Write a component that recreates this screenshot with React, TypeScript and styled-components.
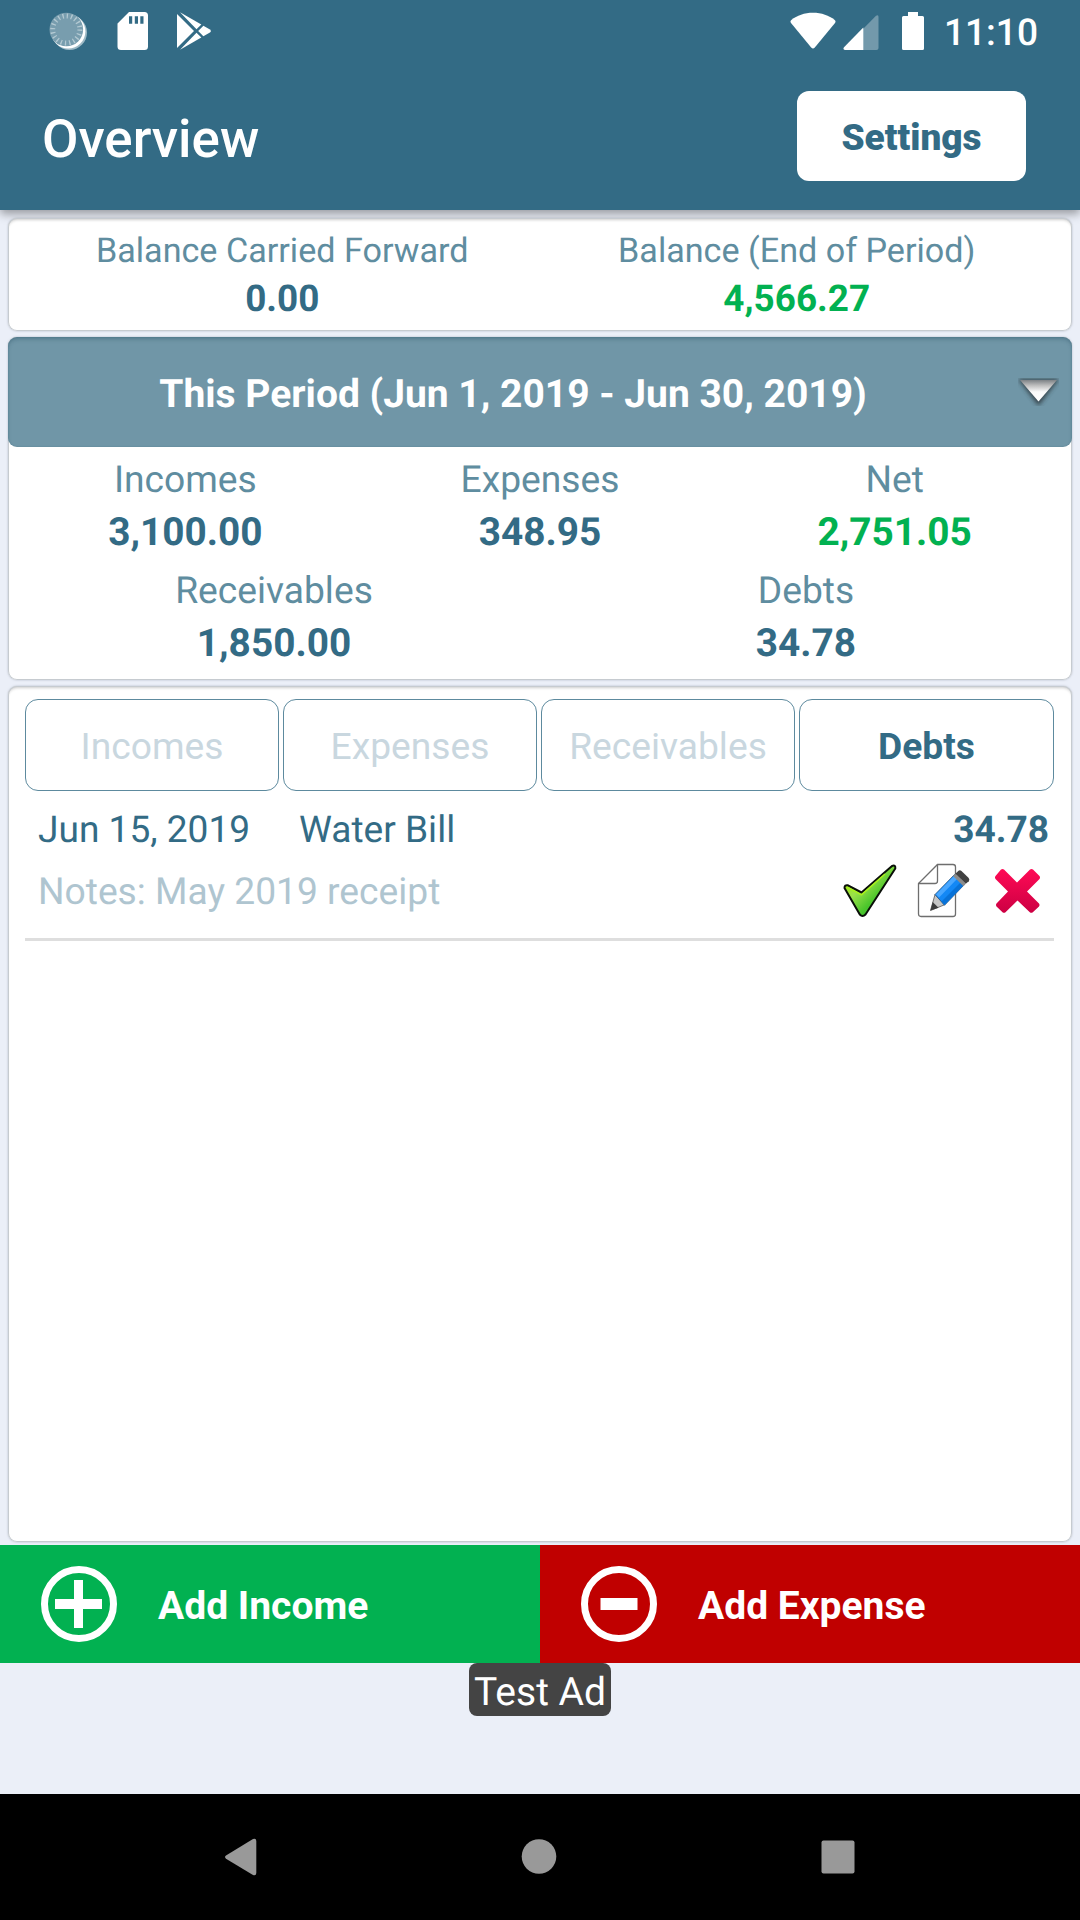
import React from "react";
import styled, { createGlobalStyle } from "styled-components";

const color = {
  primary: "#336b85",
  label: "#5f8da0",
  band: "#7096a7",
  page: "#ebeff8",
  green: "#02b151",
  red: "#c00000",
};

const GlobalStyle = createGlobalStyle`
  * { box-sizing: border-box; }
  body {
    margin: 0;
    background: ${color.page};
    font-family: Roboto, "Liberation Sans", sans-serif;
    text-rendering: geometricPrecision;
  }
  button { font-family: inherit; border: 0; margin: 0; padding: 0; }
  svg { display: block; flex: none; }
`;

const Screen = styled.div`
  width: 1080px;
  height: 1920px;
  display: flex;
  flex-direction: column;
  background: ${color.page};
  overflow: hidden;
`;

const Header = styled.header`
  height: 210px;
  flex: none;
  background: ${color.primary};
  box-shadow: 0 4px 9px rgba(0, 0, 0, 0.36);
`;

const StatusBar = styled.div`
  height: 62px;
  padding: 0 42px 0 49px;
  display: flex;
  align-items: center;
  justify-content: space-between;
`;

const StatusIcons = styled.div<{ $gap: number }>`
  display: flex;
  align-items: center;
  gap: ${(p) => p.$gap}px;
`;

const BatteryTime = styled.div`
  display: flex;
  align-items: center;
  gap: 20px;
  padding-left: 16px;
`;

const Clock = styled.span`
  color: #fff;
  font-size: 37.1px;
  font-weight: 500;
  line-height: 44px;
  padding-top: 7px;
  margin-bottom: 1px;
`;

const AppBar = styled.div`
  height: 148px;
  padding: 1px 54px 0 42px;
  display: flex;
  align-items: center;
  justify-content: space-between;
`;

const Title = styled.h1`
  margin: 0;
  padding-top: 5px;
  color: #fff;
  font-size: 52.9px;
  font-weight: 500;
  line-height: 62px;
`;

const SettingsButton = styled.button`
  width: 229px;
  height: 90px;
  padding-top: 3px;
  margin-bottom: 1px;
  border-radius: 12px;
  background: #fff;
  color: ${color.primary};
  font-size: 37px;
  font-weight: 900;
`;

const Content = styled.main`
  height: 1335px;
  flex: none;
  padding: 8px 8px 3px;
  display: flex;
  flex-direction: column;
`;

const Card = styled.section`
  background: #fff;
  border-radius: 9px;
  box-shadow:
    inset 0 0 0 1px #c6cbd0,
    inset 0 3px 3px -1px rgba(0, 0, 0, 0.2),
    0 0 2px rgba(110, 120, 135, 0.5);
`;

const BalanceCard = styled(Card)`
  height: 113px;
  flex: none;
  padding: 9px 18px 0 17px;
  display: grid;
  grid-template-columns: 1fr 1fr;
`;

const PeriodCard = styled(Card)`
  height: 343px;
  flex: none;
  margin-top: 6px;
`;

const ListCard = styled(Card)`
  flex: 1;
  margin-top: 6px;
  padding: 13px 18px 0 17px;
`;

const Metric = styled.div`
  display: flex;
  flex-direction: column;
  align-items: center;
`;

const MetricLabel = styled.span<{ $small?: boolean }>`
  color: ${color.label};
  font-size: ${(p) => (p.$small ? 34.15 : 37.2)}px;
  line-height: ${(p) => (p.$small ? 49 : 52)}px;
`;

const MetricValue = styled.span<{ $small?: boolean; $positive?: boolean }>`
  color: ${(p) => (p.$positive ? color.green : color.primary)};
  font-size: ${(p) => (p.$small ? 36.9 : 38.8)}px;
  font-weight: 700;
  line-height: ${(p) => (p.$small ? 48 : 53)}px;
`;

const PeriodBand = styled.div`
  height: 110px;
  padding-right: 13px;
  display: flex;
  align-items: center;
  border-radius: 9px;
  background: ${color.band};
  box-shadow: inset 0 3px 4px -1px rgba(30, 70, 90, 0.35), inset 0 0 1px 1px rgba(60, 105, 125, 0.12);
`;

const PeriodText = styled.span`
  flex: 1;
  padding-top: 3px;
  text-align: center;
  color: #fff;
  font-size: 39px;
  font-weight: 700;
`;

const MetricRows = styled.div`
  padding-top: 1px;
`;

const MetricRow = styled.div<{ $columns: number }>`
  display: grid;
  grid-template-columns: repeat(${(p) => p.$columns}, 1fr);
  padding-top: 6px;
`;

const Tabs = styled.div`
  display: flex;
  gap: 4px;
`;

const Tab = styled.button<{ $active?: boolean }>`
  flex: 1 1 0;
  height: 92px;
  padding-top: 1px;
  border: 1px solid #5d8a9e;
  border-radius: 13px;
  background: #fff;
  color: ${(p) => (p.$active ? color.primary : "#c9d7df")};
  font-size: 37.2px;
  font-weight: ${(p) => (p.$active ? 700 : 400)};

  &:last-child {
    flex: 0 0 255px;
  }
`;

const Entry = styled.article`
  height: 150px;
  padding: 9px 5px 0 13px;
  border-bottom: 3px solid #dedede;
`;

const EntryLine = styled.div`
  height: 61px;
  display: flex;
  align-items: center;
  color: ${color.primary};
  font-size: 37.1px;
  line-height: 61px;
`;

const EntryDate = styled.span`
  width: 261px;
`;

const EntryName = styled.span`
  flex: 1;
`;

const EntryAmount = styled.span`
  font-weight: 700;
`;

const EntryNotes = styled.span`
  flex: 1;
  padding-top: 2px;
  color: #afc5d0;
  font-size: 37.2px;
`;

const EntryActions = styled.div`
  display: flex;
  gap: 20.5px;
  align-items: center;
  padding: 0 7.5px 2px 0;
`;

const ActionBar = styled.div`
  height: 118px;
  flex: none;
  display: flex;
`;

const AddButton = styled.button<{ $color: string }>`
  flex: 1;
  display: flex;
  align-items: center;
  gap: 41px;
  padding-left: 41px;
  background: ${(p) => p.$color};
  color: #fff;
  font-size: 39px;
  font-weight: 700;
`;

const AddLabel = styled.span`
  padding-top: 3px;
`;

const AdArea = styled.div`
  flex: 1;
  display: flex;
  justify-content: center;
  align-items: flex-start;
`;

const AdBadge = styled.span`
  width: 142px;
  height: 53px;
  padding-top: 3px;
  border-radius: 8px;
  background: #444;
  color: #fff;
  font-size: 39px;
  line-height: 53px;
  text-align: center;
`;

const NavBar = styled.nav`
  height: 126px;
  flex: none;
  display: flex;
  align-items: center;
  justify-content: space-between;
  padding: 0 225px 0 224px;
  background: #000;
`;

const SyncIcon = () => (
  <svg width="40" height="40" viewBox="0 0 40 40">
    <circle cx="20.500" cy="21.500" r="17.500" fill="#9db9c5" />
    <circle cx="19.200" cy="20.300" r="17.200" fill="#fff" />
    <circle cx="17.300" cy="18.500" r="16.800" fill="#789dae" />
    <circle cx="17.300" cy="18.500" r="13.600" fill="none" stroke="#b3c9d2" strokeWidth="5" strokeDasharray="1.3 2.973" />
  </svg>
);

const SdIcon = () => (
  <svg width="32" height="38" viewBox="0 0 32 38">
    <path
      fillRule="evenodd"
      fill="#fff"
      d="M12 0H27.5Q31 0 31 3.500V34.500Q31 38 27.500 38H4Q.5 38 .5 34.500V11.500ZM12 4.300V11.700H15.200V4.300ZM17.800 4.300V11.700H21V4.300ZM23.300 4.300V11.700H26.500V4.300Z"
    />
  </svg>
);

const PlayIcon = () => (
  <svg width="35" height="38" viewBox="0 0 35 38">
    <g fill="#fff">
      <path d="M0 2 17 19 0 36Z" />
      <path d="M3 .3 24.300 12.400 19.500 17.300Z" />
      <path d="M3 37.700 24.300 25.600 19.500 20.700Z" />
      <path d="M21.200 19 26.400 13.700 32.500 17.200Q35.300 19 32.500 20.800L26.400 24.300Z" />
    </g>
  </svg>
);

const WifiIcon = () => (
  <svg width="46" height="38" viewBox="0 0 46 38">
    <path
      fill="#fff"
      d="M23 .8C14.500 .8 7 3.500 1.300 8Q-.2 9.400 1 11L21.200 35.600Q23 37.400 24.800 35.600L45 11Q46.200 9.400 44.700 8C39 3.500 31.500 .8 23 .8Z"
    />
  </svg>
);

const SignalIcon = () => (
  <svg width="36" height="38" viewBox="0 0 36 38">
    <path fill="#7399ab" d="M20 17 33 3.700Q35.500 2.100 35.500 5V36Q35.500 38 33.500 38H20Z" />
    <path fill="#fff" d="M20.300 15.500V38H2Q-.5 37.500 1 35.200Z" />
  </svg>
);

const BatteryIcon = () => (
  <svg width="22" height="38" viewBox="0 0 22 38">
    <path fill="#fff" d="M6 0H16V4H20.500Q22 4 22 5.500V36.500Q22 38 20.500 38H1.500Q0 38 0 36.500V5.500Q0 4 1.500 4H6Z" />
  </svg>
);

const DropdownIcon = () => (
  <svg width="41" height="28" viewBox="0 0 41 28">
    <defs>
      <linearGradient id="arrowFill" x1="0" y1="0" x2="0" y2="1">
        <stop offset="0" stopColor="#7d8286" />
        <stop offset=".25" stopColor="#bdbdbd" />
        <stop offset=".55" stopColor="#fafafa" />
        <stop offset="1" stopColor="#fff" />
      </linearGradient>
      <filter id="arrowShadow" x="-20%" y="-20%" width="140%" height="150%">
        <feGaussianBlur stdDeviation="2" />
      </filter>
    </defs>
    <path d="M0 1H41L20.500 28Z" fill="#2d3a40" opacity=".85" filter="url(#arrowShadow)" />
    <path d="M2 2H39L20.500 23.500Z" fill="url(#arrowFill)" />
  </svg>
);

const CheckIcon = () => (
  <svg width="54" height="54" viewBox="0 0 54 54">
    <defs>
      <linearGradient id="checkFill" x1="0" y1=".2" x2=".8" y2="1">
        <stop offset="0" stopColor="#a4f000" />
        <stop offset=".35" stopColor="#9be04a" />
        <stop offset=".65" stopColor="#4cc62c" />
        <stop offset="1" stopColor="#1fa82e" />
      </linearGradient>
    </defs>
    <path
      d="M1.500 24Q1.500 20.600 5 21.300L18.500 28.500 49 2Q52.800 .5 52.300 4.500L22.500 50.500Q19.500 53.500 16.800 50.500Z"
      fill="url(#checkFill)"
      stroke="#0a0f08"
      strokeWidth="2"
      strokeLinejoin="round"
    />
    <path d="M4.500 23.300 18.500 30.800 42 10" fill="none" stroke="#a9f21a" strokeWidth="1.500" />
  </svg>
);

const EditIcon = () => (
  <svg width="56" height="56" viewBox="0 0 56 56">
    <path
      d="M20.500 1.500H36Q38.500 1.500 38.500 4V51Q38.500 53.500 36 53.500H4Q1.500 53.500 1.500 51V20.500Z"
      fill="#fff"
      stroke="#6e6e6e"
      strokeWidth="1.300"
    />
    <path d="M20.500 1.500V18Q20.500 20.500 18 20.500H1.500" fill="none" stroke="#6e6e6e" strokeWidth="1.300" />
    <path d="M13.500 47.500 18 31.500 27.500 41.800Z" fill="#c6c6c6" stroke="#555" strokeWidth=".8" />
    <path d="M13.500 47.500 15.700 39 21.500 44.700Z" fill="#3c3c3c" />
    <path d="M18 31.500 37.500 11.500 47.500 21.500 27.500 42.300Z" fill="#1388f5" stroke="#345a80" strokeWidth=".8" />
    <path d="M19 31.500 37.500 12.500 40.500 15.500 22 34.500Z" fill="#49a7ff" />
    <path d="M24.500 38.500 44.500 18.500 47.300 21.500 27.500 42Z" fill="#0872d8" />
    <path d="M36 13 38.300 10.700 48.800 20.700 46.500 23.200Z" fill="#8b8b8b" />
    <path d="M38.300 10.700 41.500 7.700Q43 6.800 44.500 8L51.700 15Q53 16.700 51.800 18.200L48.800 20.800Z" fill="#414141" />
  </svg>
);

const DeleteIcon = () => (
  <svg width="48" height="48" viewBox="0 0 48 48">
    <defs>
      <linearGradient id="crossFill" x1="0" y1="0" x2="0" y2="1">
        <stop offset="0" stopColor="#ff0a55" />
        <stop offset="1" stopColor="#cc0043" />
      </linearGradient>
    </defs>
    <path
      d="M10 2.500 23 15.500 36 2.500Q37.500 1.500 39 2.500L45.500 9Q46.500 10.500 45.500 12L33 24.500 45 36.500Q46 38 45 39.500L38.800 45.300Q37.300 46.300 35.800 45.300L23.500 33.500 11.500 45.300Q10 46.300 8.500 45.300L2.500 39.500Q1.500 38 2.500 36.500L14 24.500 1.500 12Q.5 10.500 1.500 9L7 2.500Q8.500 1.500 10 2.500Z"
      fill="url(#crossFill)"
    />
  </svg>
);

const CircleIcon = ({ plus }: { plus?: boolean }) => (
  <svg width="76" height="76" viewBox="0 0 76 76">
    <circle cx="38" cy="38" r="34.500" fill="none" stroke="#fff" strokeWidth="7" />
    {plus ? (
      <path d="M14 33H33V14H42V33H61V43H42V62H33V43H14Z" fill="#fff" />
    ) : (
      <rect x="19.500" y="32" width="37" height="12" fill="#fff" />
    )}
  </svg>
);

const BackIcon = () => (
  <svg width="33" height="38" viewBox="0 0 33 38">
    <path d="M2 17.500 29 1Q32.300 0 32.300 3V35Q32.300 38 29 37L2 20.700Q0 19 2 17.500Z" fill="#999" />
  </svg>
);

const HomeIcon = () => (
  <svg width="36" height="36" viewBox="0 0 36 36">
    <circle cx="18" cy="17.500" r="17.300" fill="#999" />
  </svg>
);

const RecentsIcon = () => (
  <svg width="34" height="34" viewBox="0 0 34 34">
    <rect x=".5" y=".5" width="33" height="33" rx="2" fill="#999" />
  </svg>
);

type MetricData = { label: string; value: string; positive?: boolean };

const balances: MetricData[] = [
  { label: "Balance Carried Forward", value: "0.00" },
  { label: "Balance (End of Period)", value: "4,566.27", positive: true },
];

const periodRows: MetricData[][] = [
  [
    { label: "Incomes", value: "3,100.00" },
    { label: "Expenses", value: "348.95" },
    { label: "Net", value: "2,751.05", positive: true },
  ],
  [
    { label: "Receivables", value: "1,850.00" },
    { label: "Debts", value: "34.78" },
  ],
];

const tabs = ["Incomes", "Expenses", "Receivables", "Debts"];

export default function App() {
  return (
    <Screen>
      <GlobalStyle />
      <Header>
        <StatusBar>
          <StatusIcons $gap={28}>
            <SyncIcon />
            <SdIcon />
            <PlayIcon />
          </StatusIcons>
          <StatusIcons $gap={7}>
            <WifiIcon />
            <SignalIcon />
            <BatteryTime>
              <BatteryIcon />
              <Clock>11:10</Clock>
            </BatteryTime>
          </StatusIcons>
        </StatusBar>
        <AppBar>
          <Title>Overview</Title>
          <SettingsButton>Settings</SettingsButton>
        </AppBar>
      </Header>
      <Content>
        <BalanceCard>
          {balances.map((m) => (
            <Metric key={m.label}>
              <MetricLabel $small>{m.label}</MetricLabel>
              <MetricValue $small $positive={m.positive}>
                {m.value}
              </MetricValue>
            </Metric>
          ))}
        </BalanceCard>
        <PeriodCard>
          <PeriodBand>
            <PeriodText>This Period (Jun 1, 2019 - Jun 30, 2019)</PeriodText>
            <DropdownIcon />
          </PeriodBand>
          <MetricRows>
            {periodRows.map((row) => (
              <MetricRow key={row[0].label} $columns={row.length}>
                {row.map((m) => (
                  <Metric key={m.label}>
                    <MetricLabel>{m.label}</MetricLabel>
                    <MetricValue $positive={m.positive}>{m.value}</MetricValue>
                  </Metric>
                ))}
              </MetricRow>
            ))}
          </MetricRows>
        </PeriodCard>
        <ListCard>
          <Tabs>
            {tabs.map((t) => (
              <Tab key={t} $active={t === "Debts"}>
                {t}
              </Tab>
            ))}
          </Tabs>
          <Entry>
            <EntryLine>
              <EntryDate>Jun 15, 2019</EntryDate>
              <EntryName>Water Bill</EntryName>
              <EntryAmount>34.78</EntryAmount>
            </EntryLine>
            <EntryLine>
              <EntryNotes>Notes: May 2019 receipt</EntryNotes>
              <EntryActions>
                <CheckIcon />
                <EditIcon />
                <DeleteIcon />
              </EntryActions>
            </EntryLine>
          </Entry>
        </ListCard>
      </Content>
      <ActionBar>
        <AddButton $color={color.green}>
          <CircleIcon plus />
          <AddLabel>Add Income</AddLabel>
        </AddButton>
        <AddButton $color={color.red}>
          <CircleIcon />
          <AddLabel>Add Expense</AddLabel>
        </AddButton>
      </ActionBar>
      <AdArea>
        <AdBadge>Test Ad</AdBadge>
      </AdArea>
      <NavBar>
        <BackIcon />
        <HomeIcon />
        <RecentsIcon />
      </NavBar>
    </Screen>
  );
}
